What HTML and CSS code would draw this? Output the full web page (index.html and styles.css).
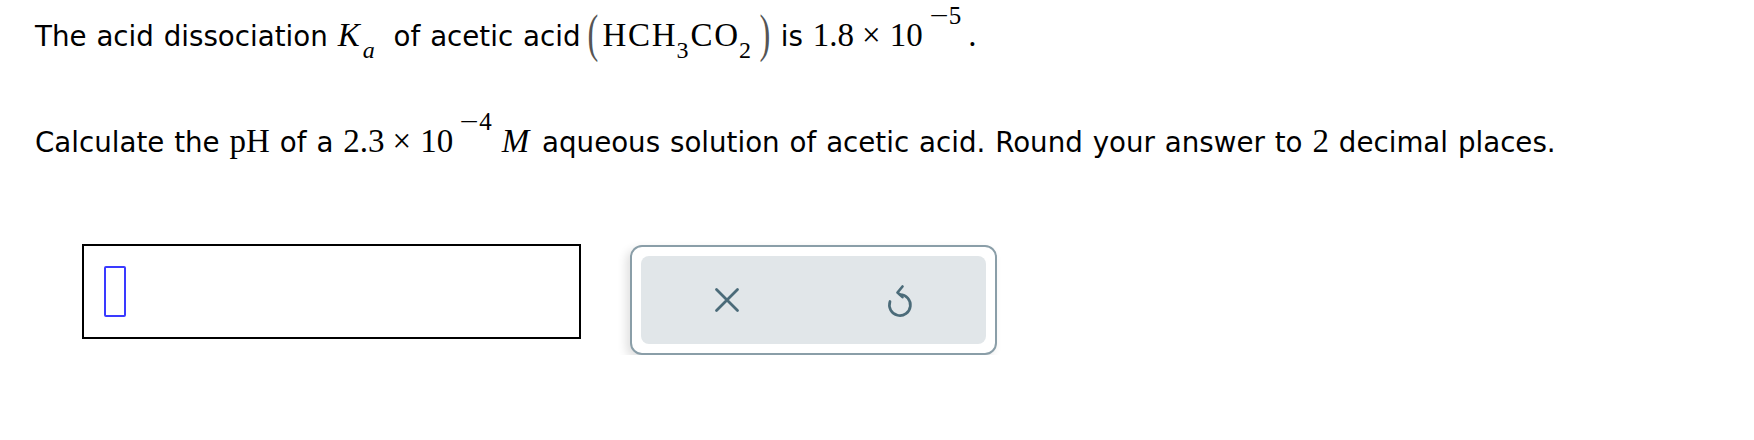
FILE: index.html
```html
<!DOCTYPE html>
<html>
<head>
<meta charset="utf-8">
<link rel="stylesheet" href="styles.css">
</head>
<body>
<div class="page">
  <p class="line l1">The acid dissociation <span class="m mi">K</span><span class="m sub mi sub-a">a</span> of acetic acid <span class="paren po">(</span><span class="m sp">HCH</span><span class="m sub">3</span><span class="m sp">CO</span><span class="m sub">2</span><span class="paren pc">)</span> is <span class="m">1.8</span><span class="m op">×</span><span class="m">10</span><span class="m sup"><span class="minus">−</span>5</span><span class="m dot">.</span></p>
  <p class="line l2">Calculate the <span class="m">pH</span> of a <span class="m">2.3</span><span class="m op">×</span><span class="m">10</span><span class="m sup"><span class="minus">−</span>4</span> <span class="m mi mm">M</span> aqueous solution of acetic acid. Round your answer to <span class="m">2</span> decimal places.</p>
  <div class="answer">
    <div class="input"><div class="cursor"></div></div>
    <div class="tools">
      <div class="tools-inner">
        <div class="btn">
          <svg width="26" height="26" viewBox="0 0 26 26" class="ico"><path d="M2.5 2.5 L23.5 23.5 M23.5 2.5 L2.5 23.5" fill="none" stroke="#4b6b79" stroke-width="2.8" stroke-linecap="round"/></svg>
        </div>
        <div class="btn">
          <svg width="28" height="36" viewBox="0 0 28 36" class="ico"><path d="M14 12.5 A10.5 10.5 0 1 1 4 19.5" fill="none" stroke="#4b6b79" stroke-width="2.7" stroke-linecap="round"/><path d="M16.5 4.5 L11.5 10.5 L16.5 15" fill="none" stroke="#4b6b79" stroke-width="2.7" stroke-linecap="round" stroke-linejoin="round"/></svg>
        </div>
      </div>
    </div>
  </div>
</div>
</body>
</html>
```

FILE: styles.css
```css
html, body {
  margin: 0;
  padding: 0;
  background: #ffffff;
}
.page {
  padding-left: 35px;
  font-family: "DejaVu Sans", Verdana, sans-serif;
  font-size: 27.7px;
  word-spacing: 1.1px;
  color: #000;
}
.line {
  margin: 0;
  height: 40px;
  line-height: 40px;
  white-space: nowrap;
}
.l1 {
  margin-top: 16px;
}
.l2 {
  margin-top: 66px;
}
.m {
  font-family: "Liberation Serif", "Times New Roman", serif;
  font-size: 33px;
  line-height: 0;
  word-spacing: 0;
}
.sp {
  letter-spacing: 1.8px;
}
.mi {
  font-style: italic;
}
.mm {
  margin-right: 3px;
}
.op {
  margin: 0 9px 0 8px;
}
.dot {
  margin-left: 7px;
}
.sub {
  font-size: 24px;
  vertical-align: -12px;
  margin: 0 2px 0 -1px;
}
.sub-a {
  margin: 0 9px 0 3px;
}
.sup {
  font-size: 25px;
  vertical-align: 22px;
  margin-left: 9px;
}
.minus {
  display: inline-block;
  transform: scaleX(1.35);
  margin-right: 3px;
}
.paren {
  display: inline-block;
  font-family: "Liberation Serif", "Times New Roman", serif;
  font-size: 36px;
  line-height: 0;
  color: #555;
  transform: scale(0.9, 1.45);
}
.po {
  margin: 0 3px 0 -3px;
}
.pc {
  margin-left: 6px;
}
.answer {
  display: flex;
  align-items: flex-start;
  gap: 49px;
  margin-left: 47px;
  margin-top: 82px;
}
.input {
  width: 499px;
  height: 95px;
  box-sizing: border-box;
  border: 2px solid #000;
  padding: 20px;
}
.cursor {
  width: 22px;
  height: 51px;
  box-sizing: border-box;
  border: 2px solid #3a3aff;
  border-radius: 2px;
}
.tools {
  width: 367px;
  height: 110px;
  box-sizing: border-box;
  border: 2px solid #8a9ea8;
  border-radius: 12px;
  padding: 9px;
  margin-top: 1px;
  background: #fff;
  box-shadow: -4px 4px 10px rgba(0, 0, 0, 0.12);
}
.tools-inner {
  display: flex;
  height: 100%;
  background: #e1e6e9;
  border-radius: 8px;
}
.btn {
  flex: 1;
  display: flex;
  align-items: center;
  justify-content: center;
}
.ico {
  display: block;
}
```
